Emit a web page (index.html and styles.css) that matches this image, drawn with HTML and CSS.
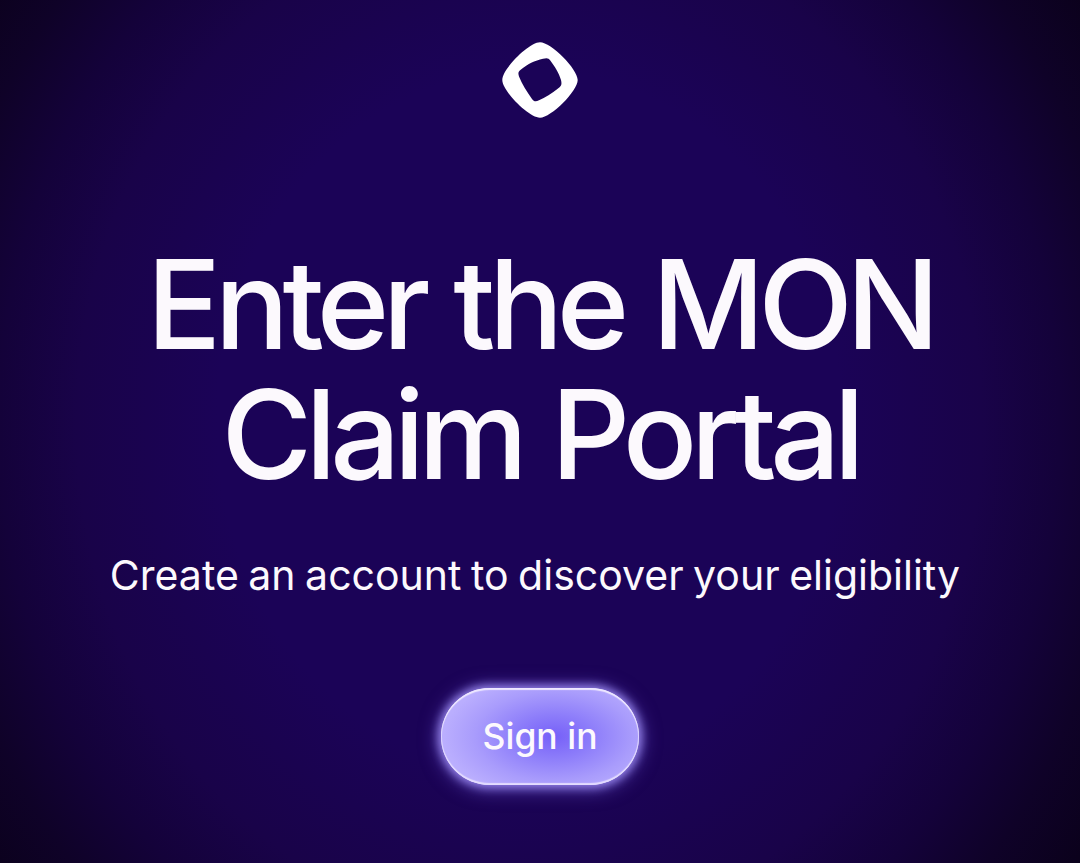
FILE: index.html
```html
<!DOCTYPE html>
<html lang="en">
<head>
    <meta charset="UTF-8">
    <meta name="viewport" content="width=device-width, initial-scale=1.0">
    <title>MON Claim Portal</title>
    <link rel="stylesheet" href="styles.css">
</head>
<body>
    <main class="portal">
        <svg class="logo" viewBox="0 0 76 76" aria-hidden="true">
            <path fill="#fff" fill-rule="evenodd" d="M38 .3C27 .3 .3 27 .3 38S27 75.7 38 75.7S75.7 49 75.7 38S49 .3 38 .3ZM41 16.800C44.500 15.800 46.500 15.800 48.300 18.500C52.500 24 57 31 59 38C60 42.500 59.500 43.800 56 46.500C50 51.500 43 55.500 37 58.300C34 59.800 32 59.800 30 57C25 50 20 42 17 34.500C16 31 16 30 19 27.500C25 22.500 33 18.500 41 16.800Z"/>
        </svg>

        <h1 class="title">Enter the MON Claim Portal</h1>
        <p class="subtitle">Create an account to discover your eligibility</p>
        <button class="signin-btn">Sign in</button>
    </main>
</body>
</html>
```
FILE: styles.css
```css
body {
    margin: 0;
    font-family: Inter, 'Liberation Sans', sans-serif;
    background-color: #1b0356;
    color: #fcf9fd;
}

.portal {
    display: flex;
    flex-direction: column;
    align-items: center;
    box-sizing: border-box;
    height: 863px;
    padding-top: 42px;
    overflow: hidden;
    text-align: center;
    background: radial-gradient(ellipse 780px 880px at 49% 49%, #1b0357 40%, #190349 58%, #14023a 68%, #0f0228 77%, #0b011c 86%);
}

.logo {
    width: 76px;
    height: 76px;
}

.title {
    width: 900px;
    margin: 121px 0 0;
    font-size: 123.5px;
    font-weight: 540;
    line-height: 130px;
    letter-spacing: -0.053em;
    word-spacing: 3px;
}

.subtitle {
    margin: 51px 10px 0 0;
    font-size: 41px;
    line-height: 50px;
    word-spacing: -2px;
    white-space: nowrap;
}

.signin-btn {
    width: 198px;
    height: 97px;
    margin: 88px 0 0;
    padding: 0;
    border: 0;
    border-radius: 49px;
    background: radial-gradient(ellipse 110px 62px at 57% 50%, #7660f8 0%, #8d7dfa 35%, #a99cfc 72%, #baaefe 100%);
    box-shadow:
        inset 0 2px 1px #eee8ff,
        inset 0 -2px 1px #e4dcff,
        inset 0 0 0 1px #d6ccff,
        0 0 8px 3px rgba(165, 148, 250, 0.8),
        0 2px 18px 4px rgba(120, 100, 225, 0.55);
    color: #fcf9fd;
    font-family: inherit;
    font-size: 35.5px;
    font-weight: 500;
}
```
